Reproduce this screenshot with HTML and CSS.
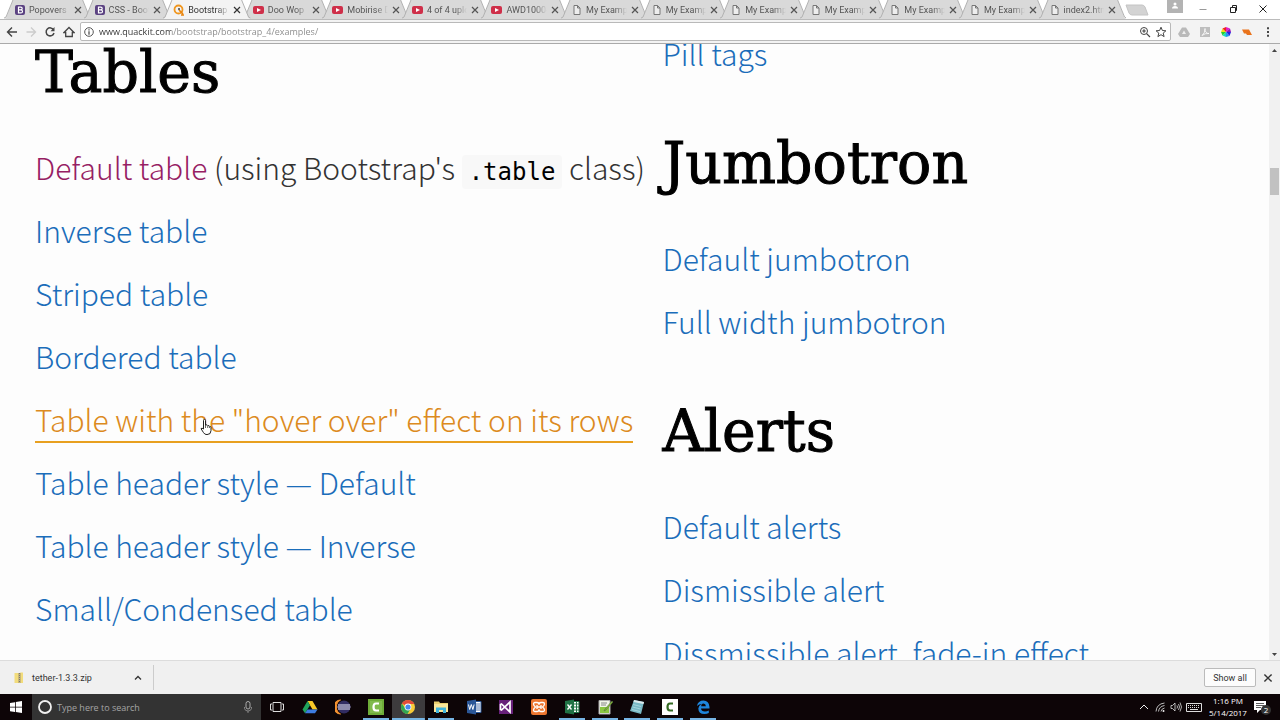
FILE: index.html
```html
<!DOCTYPE html>
<html lang="en">
<head>
    <meta charset="UTF-8">
    <meta name="viewport" content="width=device-width, initial-scale=1.0">
    <title>Bootstrap 4 Examples</title>
    <link rel="stylesheet" href="styles.css">
</head>
<body>
    <svg class="defs" aria-hidden="true">
        <symbol id="i-tab" viewBox="0 0 88 20" preserveAspectRatio="none">
            <path d="M0 20 L2 19 L9 0 H79 L86 19 L88 20Z" fill="currentColor" />
            <path d="M0 19 L2 18 L9 0 M79 0 L86 18 L88 19" fill="none" stroke="#b0b0b0" />
        </symbol>
        <symbol id="i-boot" viewBox="0 0 12 12">
            <rect x="1" y="1" width="10" height="10" rx="2" fill="#5b4282" />
            <path d="M4.5 3.2h2.2q1.5 0 1.5 1.3T6.7 5.9H4.5h2.4q1.6 0 1.6 1.5T6.9 8.9H4.5z" fill="none" stroke="#fff" stroke-width="1.2" />
        </symbol>
        <symbol id="i-quack" viewBox="0 0 12 12">
            <circle cx="5.5" cy="5.5" r="4" fill="none" stroke="#f0961e" stroke-width="1.8" />
            <path d="M6 6l4 4M8 11h3" stroke="#e8830c" stroke-width="1.7" />
            <circle cx="6" cy="5" r="1" fill="#444" />
        </symbol>
        <symbol id="i-yt" viewBox="0 0 12 12">
            <rect x="0" y="2" width="11" height="8" rx="2" fill="#cf2f49" />
            <path d="M4 4l4 2-4 2z" fill="#fff" />
        </symbol>
        <symbol id="i-file" viewBox="0 0 12 12">
            <path d="M3 1.5h3.5L9 4v6.500H3zM6.500 1.500V4H9" fill="#eee" stroke="#777" />
        </symbol>
        <symbol id="i-x" viewBox="0 0 10 10">
            <path d="M2 2l6 6M8 2l-6 6" stroke="currentColor" stroke-width="1.2" />
        </symbol>
        <symbol id="i-up" viewBox="0 0 12 12">
            <path d="M3 7.500l3-3 3 3" fill="none" stroke="currentColor" stroke-width="1.3" />
        </symbol>
        <symbol id="i-camtasia" viewBox="0 0 16 16">
            <path d="M11 4.500H8Q5.500 4.500 5.500 8T8 11.500h3" fill="none" stroke="currentColor" stroke-width="2.200" />
        </symbol>
    </svg>

    <header class="tab-strip">
        <nav class="tabs">
            <a class="tab" href="#"><svg class="tab-bg"><use href="#i-tab" /></svg><svg class="tab-icon"><use href="#i-boot" /></svg><span class="tab-title">Popovers ·</span><svg class="tab-close"><use href="#i-x" /></svg></a>
            <a class="tab" href="#"><svg class="tab-bg"><use href="#i-tab" /></svg><svg class="tab-icon"><use href="#i-boot" /></svg><span class="tab-title">CSS - Boots</span><svg class="tab-close"><use href="#i-x" /></svg></a>
            <a class="tab active" href="#"><svg class="tab-bg"><use href="#i-tab" /></svg><svg class="tab-icon"><use href="#i-quack" /></svg><span class="tab-title">Bootstrap 4</span><svg class="tab-close"><use href="#i-x" /></svg></a>
            <a class="tab" href="#"><svg class="tab-bg"><use href="#i-tab" /></svg><svg class="tab-icon"><use href="#i-yt" /></svg><span class="tab-title">Doo Wop</span><svg class="tab-close"><use href="#i-x" /></svg></a>
            <a class="tab" href="#"><svg class="tab-bg"><use href="#i-tab" /></svg><svg class="tab-icon"><use href="#i-yt" /></svg><span class="tab-title">Mobirise D</span><svg class="tab-close"><use href="#i-x" /></svg></a>
            <a class="tab" href="#"><svg class="tab-bg"><use href="#i-tab" /></svg><svg class="tab-icon"><use href="#i-yt" /></svg><span class="tab-title">4 of 4 uplo</span><svg class="tab-close"><use href="#i-x" /></svg></a>
            <a class="tab" href="#"><svg class="tab-bg"><use href="#i-tab" /></svg><svg class="tab-icon"><use href="#i-yt" /></svg><span class="tab-title">AWD1000-</span><svg class="tab-close"><use href="#i-x" /></svg></a>
            <a class="tab" href="#"><svg class="tab-bg"><use href="#i-tab" /></svg><svg class="tab-icon"><use href="#i-file" /></svg><span class="tab-title">My Exampl</span><svg class="tab-close"><use href="#i-x" /></svg></a>
            <a class="tab" href="#"><svg class="tab-bg"><use href="#i-tab" /></svg><svg class="tab-icon"><use href="#i-file" /></svg><span class="tab-title">My Exampl</span><svg class="tab-close"><use href="#i-x" /></svg></a>
            <a class="tab" href="#"><svg class="tab-bg"><use href="#i-tab" /></svg><svg class="tab-icon"><use href="#i-file" /></svg><span class="tab-title">My Exampl</span><svg class="tab-close"><use href="#i-x" /></svg></a>
            <a class="tab" href="#"><svg class="tab-bg"><use href="#i-tab" /></svg><svg class="tab-icon"><use href="#i-file" /></svg><span class="tab-title">My Exampl</span><svg class="tab-close"><use href="#i-x" /></svg></a>
            <a class="tab" href="#"><svg class="tab-bg"><use href="#i-tab" /></svg><svg class="tab-icon"><use href="#i-file" /></svg><span class="tab-title">My Exampl</span><svg class="tab-close"><use href="#i-x" /></svg></a>
            <a class="tab" href="#"><svg class="tab-bg"><use href="#i-tab" /></svg><svg class="tab-icon"><use href="#i-file" /></svg><span class="tab-title">My Exampl</span><svg class="tab-close"><use href="#i-x" /></svg></a>
            <a class="tab" href="#"><svg class="tab-bg"><use href="#i-tab" /></svg><svg class="tab-icon"><use href="#i-file" /></svg><span class="tab-title">index2.htm</span><svg class="tab-close"><use href="#i-x" /></svg></a>
        </nav>
        <div class="window-buttons">
            <button class="new-tab" aria-label="New tab"><svg viewBox="0 0 24 12"><path d="M1 1h16q2 0 3 2l3 8H7q-2 0-3-2z" fill="#d3d3d3" stroke="#c4c4c4" /></svg></button>
            <button class="profile" aria-label="Profile"><svg viewBox="0 0 16 13"><path d="M0 0h16v13H0z" fill="#b3b3b3" /><circle cx="8" cy="4" r="1.500" fill="#fff" /><path d="M5 8.500q0-2.500 3-2.500t3 2.500z" fill="#fff" /></svg></button>
            <button class="win-btn" aria-label="Minimize"><svg viewBox="0 0 12 12"><path d="M2.500 6.500h7" stroke="#999" /></svg></button>
            <button class="win-btn" aria-label="Restore"><svg viewBox="0 0 12 12"><path d="M3.500 4.500h5v5h-5zM5.500 4.500v-2h4v5h-1" fill="none" stroke="#222" /></svg></button>
            <button class="win-btn" aria-label="Close"><svg viewBox="0 0 12 12"><path d="M2.500 2.500l7 7M9.500 2.500l-7 7" stroke="#222" /></svg></button>
        </div>
    </header>

    <div class="toolbar">
        <button class="tool" aria-label="Back"><svg viewBox="0 0 12 12"><path d="M11 6H2M6 1.500L1.500 6 6 10.500" fill="none" stroke="#444" stroke-width="1.400" /></svg></button>
        <button class="tool" aria-label="Forward"><svg viewBox="0 0 12 12"><path d="M1.500 6h9M6 1.500L10.500 6 6 10.500" fill="none" stroke="#ccc" stroke-width="1.400" /></svg></button>
        <button class="tool" aria-label="Reload"><svg viewBox="0 0 12 12"><path d="M9.600 3.800A4 4 0 1 0 10 7" fill="none" stroke="#444" stroke-width="1.500" /><path d="M10.500 1v4.200H6.500z" fill="#444" /></svg></button>
        <button class="tool" aria-label="Home"><svg viewBox="0 0 12 12"><path d="M1 6.500L6 1.500l5 5H9.300v4H2.700v-4z" fill="none" stroke="#444" stroke-width="1.300" /></svg></button>
        <div class="address">
            <svg class="address-icon" viewBox="0 0 12 12"><circle cx="6" cy="6" r="4.300" fill="none" stroke="#555" /><path d="M6 3.200v1.200M6 5.300v3.500" stroke="#444" stroke-width="1.200" /></svg>
            <input class="url" type="text" aria-label="Address" value="www.quackit.com/bootstrap/bootstrap_4/examples/">
            <svg class="address-icon" viewBox="0 0 12 12"><circle cx="5" cy="5" r="3.500" fill="none" stroke="#444" /><path d="M3.200 5h3.600M5 3.200v3.600M7.600 7.600L11 11" stroke="#444" stroke-width="1.200" /></svg>
            <svg class="address-icon" viewBox="0 0 12 12"><path d="M6 1.200l1.400 3.300 3.500.3-2.700 2.300.9 3.500L6 8.700l-3.100 1.900.9-3.500L1.100 4.800l3.500-.3z" fill="none" stroke="#444" /></svg>
        </div>
        <div class="extensions">
            <svg viewBox="0 0 12 12"><path d="M4 1.500h4l4 6.500-2 3H2L0 8z" fill="#b9b9b9" /><path d="M6 4.500L8 8H4z" fill="#eee" /></svg>
            <svg viewBox="0 0 12 12"><path d="M1 1h10v10H1z" fill="#bebebe" /><path d="M3 9.500q3-2 3-7 0 5 4 5-4-.5-7 2z" fill="none" stroke="#fff" stroke-width=".8" /></svg>
            <svg viewBox="0 0 12 12"><path d="M6 6V1l4 1.500z" fill="#e21cc8" /><path d="M6 6l4-3.500L11 6z" fill="#9414b8" /><path d="M6 6h5l-1.500 4z" fill="#2422e0" /><path d="M6 6l3.500 4L6 11z" fill="#2090f0" /><path d="M6 6v5L2.500 9.500z" fill="#18d8c0" /><path d="M6 6L2.500 9.500 1 6z" fill="#24cf30" /><path d="M6 6H1l1.500-3.500z" fill="#f1dc18" /><path d="M6 6L2.500 2.500 6 1z" fill="#f02020" /></svg>
            <svg viewBox="0 0 12 12"><path d="M1 3.500h7l3 5.500H6L5 7.500H3z" fill="#e9731c" /></svg>
            <svg viewBox="0 0 12 12"><path d="M5 1.200h2v2H5zM5 5h2v2H5zM5 8.800h2v2H5z" fill="#444" /></svg>
        </div>
    </div>

    <div class="viewport">
        <main class="page">
            <section class="column">
                <h2>Tables</h2>
                <ul class="examples">
                    <li><a class="visited" href="#">Default table</a> (using Bootstrap's <code>.table</code> class)</li>
                    <li><a href="#">Inverse table</a></li>
                    <li><a href="#">Striped table</a></li>
                    <li><a href="#">Bordered table</a></li>
                    <li class="pointed"><a class="hovered" href="#">Table with the "hover over" effect on its rows</a>
                        <svg class="pointer" viewBox="0 0 12 18"><path d="M3.500 10V2.500q0-1.200 1-1.200t1 1.200V7q2-.6 2.300.6 1.500-.2 1.700.7 1.500 0 1.500 1.300v3q0 4-4 4-2.500 0-3.500-2L1 10.700q.8-1.300 2.500.3z" fill="#fff" stroke="#222" /><path d="M5.500 7v3M7.700 8v2M9.500 8.500V10" stroke="#222" stroke-width=".7" /></svg>
                    </li>
                    <li><a href="#">Table header style — Default</a></li>
                    <li><a href="#">Table header style — Inverse</a></li>
                    <li><a href="#">Small/Condensed table</a></li>
                </ul>
            </section>
            <section class="column column-right">
                <ul class="examples">
                    <li><a href="#">Pill tags</a></li>
                </ul>
                <h2>Jumbotron</h2>
                <ul class="examples">
                    <li><a href="#">Default jumbotron</a></li>
                    <li><a href="#">Full width jumbotron</a></li>
                </ul>
                <h2>Alerts</h2>
                <ul class="examples">
                    <li><a href="#">Default alerts</a></li>
                    <li><a href="#">Dismissible alert</a></li>
                    <li><a href="#">Dissmissible alert, fade-in effect</a></li>
                </ul>
            </section>
        </main>
        <div class="scrollbar">
            <svg viewBox="0 0 11 12"><path d="M3 8l2.500-3L8 8z" fill="#444" /></svg>
            <div class="track"><div class="thumb"></div></div>
            <svg viewBox="0 0 11 12"><path d="M3 5l2.500 3L8 5z" fill="#444" /></svg>
        </div>
    </div>

    <div class="downloads">
        <button class="download">
            <svg class="zip" viewBox="0 0 12 12"><path d="M1.500 1h5l1-.5H10V11H1.500z" fill="#f2dc7c" /><path d="M5 1h3v10H5z" fill="#c9b777" /><path d="M6.500 1v10" stroke="#777" stroke-dasharray="1 1" /></svg>
            <span class="file-name">tether-1.3.3.zip</span>
            <svg class="chevron"><use href="#i-up" /></svg>
        </button>
        <button class="show-all">Show all</button>
        <button class="close-bar" aria-label="Close downloads"><svg><use href="#i-x" /></svg></button>
    </div>

    <footer class="taskbar">
        <button class="start" aria-label="Start"><svg viewBox="0 0 14 14"><path d="M1 3l5-.8v4.500H1zM6.800 2L13 1v5.700H6.800zM1 7.400h5V12l-5-.8zM6.800 7.400H13V13l-6.200-1z" fill="#fff" /></svg></button>
        <div class="search">
            <svg class="cortana" viewBox="0 0 16 16"><circle cx="8" cy="8" r="6" fill="none" stroke="#f0f0f0" stroke-width="1.800" /></svg>
            <input type="text" aria-label="Search" placeholder="Type here to search">
            <svg class="mic" viewBox="0 0 12 14"><rect x="4" y="1.500" width="4" height="7.500" rx="2" fill="none" stroke="#aaa" /><path d="M2.500 7v1.500Q3 11 6 11t3.500-2.500V7M6 11v2" fill="none" stroke="#999" stroke-width=".8" /></svg>
        </div>
        <div class="apps">
            <button class="app" aria-label="Task view"><svg viewBox="0 0 16 16"><path d="M4 3.500h8v9H4zM3 5H1.500v6H3M13 5h1.500v6H13" fill="none" stroke="#ddd" /></svg></button>
            <button class="app" aria-label="Google Drive"><svg viewBox="0 0 16 16"><path d="M5.500 2h5l5 8.500h-5z" fill="#f8c828" /><path d="M5.500 2L8 6.300l-5 8L.5 10.500z" fill="#20a35c" /><path d="M5.500 10.500h10L13 14.300H3z" fill="#3d7ce0" /></svg></button>
            <button class="app" aria-label="Eclipse"><svg viewBox="0 0 16 16"><path d="M5.500 1A7 7 0 0 0 5.500 15 8 8 0 0 1 5.500 1z" fill="#f59332" stroke="#f59332" /><circle cx="9" cy="8" r="6.500" fill="#322d62" /><path d="M3 6h12M2.500 8h13M3 10h12" stroke="#e8e8f5" stroke-width="1.200" /></svg></button>
            <button class="app running" aria-label="Camtasia"><svg viewBox="0 0 16 16" class="camtasia"><path d="M0 0h16v16H0z" fill="#6eac38" /><path d="M2 2h12v12H2z" fill="#80bb4d" /><use href="#i-camtasia" /></svg></button>
            <button class="app running current" aria-label="Chrome"><svg viewBox="0 0 16 16"><circle cx="8" cy="8" r="7" fill="#f7cb38" /><path d="M8 8L1.900 4.500A7 7 0 0 1 14.100 4.500L14 5H8z" fill="#e24b3a" /><path d="M1.900 4.500A7 7 0 0 0 7.500 15l3.200-5.500L5.300 9.500z" fill="#32a653" /><circle cx="8" cy="8" r="3.400" fill="#fff" /><circle cx="8" cy="8" r="2.600" fill="#4788ee" /></svg></button>
            <button class="app running" aria-label="File Explorer"><svg viewBox="0 0 16 16"><path d="M1 2.500h5l1 1.500h8v9H1z" fill="#e9cf70" /><path d="M1 5h14v8H1z" fill="#f8e69b" /><path d="M3 14V8.500h10V14h-3v-3H6v3z" fill="#40b4dc" /></svg></button>
            <button class="app" aria-label="Word"><svg viewBox="0 0 16 16"><path d="M8 2.500h7v11H8z" fill="#fff" stroke="#2b5797" /><path d="M9.500 5H14M9.500 7H14M9.500 9H14M9.500 11H14" stroke="#2b5797" stroke-width=".8" /><path d="M1 2l9-1.500v15L1 14z" fill="#2b5797" /><path d="M2.500 5.500l1.200 5 1.600-5 1.600 5 1.200-5" fill="none" stroke="#fff" /></svg></button>
            <button class="app" aria-label="Visual Studio"><svg viewBox="0 0 16 16"><path d="M1 1h14v14H1z" fill="#68217a" /><path d="M2.500 5.500v5l1 .500L12 3v10L3.500 5z" fill="none" stroke="#fff" stroke-width="1.700" /></svg></button>
            <button class="app" aria-label="XAMPP"><svg viewBox="0 0 16 16"><rect width="16" height="16" rx="2" fill="#ed762f" /><path d="M4 3.500h2q2 0 2 2.200 0-2.200 2-2.200h2q1.500 0 1.500 1.500T11.500 8q2 1.500 2 3T12 12.500h-2q-2 0-2-2.200 0 2.200-2 2.200H4Q2.500 12.500 2.500 11t2-3q-2-1.500-2-3T4 3.500zM6 6v4M10 6v4M6 8h4" fill="none" stroke="#fff" stroke-width="1.300" /></svg></button>
            <button class="app running" aria-label="Excel"><svg viewBox="0 0 16 16"><path d="M8 2.500h7v11H8z" fill="#fff" stroke="#207245" /><path d="M9 5h6M9 8h6M9 11h6M12.500 3v10" stroke="#207245" /><path d="M1 2l9-1.500v15L1 14z" fill="#207245" /><path d="M3.500 5.500l4 5M7.500 5.500l-4 5" stroke="#fff" stroke-width="1.300" /></svg></button>
            <button class="app running" aria-label="Notepad++"><svg viewBox="0 0 16 16"><path d="M2 1.500h11V15H2z" fill="#f1f5e8" stroke="#aaa" /><path d="M3 8h9v6H3z" fill="#8ac640" /><path d="M4 4h6M4 6h5" stroke="#888" /><path d="M15 2L8 10l-1 2 2-1 7-8z" fill="#8bb933" stroke="#464" stroke-width=".500" /></svg></button>
            <button class="app running" aria-label="Notepad"><svg viewBox="0 0 16 16"><path d="M5 1l10 2-3 12-11-3z" fill="#79b9c5" /><path d="M5 1l10 2-.5 2-10-2z" fill="#ddebed" /><path d="M4 5.500l8 2M3.500 8l8 2M3 10.500l8 2" stroke="#b6e0e5" stroke-width=".7" /></svg></button>
            <button class="app running" aria-label="Camtasia Recorder"><svg viewBox="0 0 16 16" class="recorder"><path d="M0 0h16v16H0z" fill="#fff" /><use href="#i-camtasia" /></svg></button>
            <button class="app running" aria-label="Edge"><svg viewBox="0 0 16 16"><path d="M2 7Q3 1.500 8.500 1.500 14 1.500 14.500 8v1.500H6Q6.300 12.500 10 12.500q2 0 3.800-1V14Q12 15 9.500 15 3.500 15 3.300 9.500 3.500 6.500 6.500 5 4 5 2 7zM6.200 7.200h4.700Q10.700 4.500 8.500 4.500T6.200 7.200z" fill="#1e86dc" fill-rule="evenodd" /></svg></button>
        </div>
        <div class="tray">
            <svg viewBox="0 0 12 12"><path d="M2 8l4-4 4 4" fill="none" stroke="#eee" /></svg>
            <svg viewBox="0 0 12 12"><path d="M2 10.500Q2.500 3 10.500 2M4.500 10.500Q5 5.500 10.500 4.500M7 10.500Q7 8 10.500 7" fill="none" stroke="#bbb" /><circle cx="9.500" cy="10" r="1" fill="#eee" /></svg>
            <svg viewBox="0 0 12 12"><path d="M1 4.500h1.500L5 2v8L2.500 7.500H1zM7 4.500q1 1.500 0 3M8.500 3q2 3 0 6M10 1.500q3 4.500 0 9" fill="none" stroke="#ddd" stroke-width=".8" /></svg>
            <svg class="keyboard" viewBox="0 0 16 12"><path d="M.5 2.500h15v8H.5z" fill="none" stroke="#ddd" /><path d="M2 4.500h12M2 6.500h12" stroke="#ddd" stroke-dasharray="1 1" /><path d="M4 8.500h8" stroke="#ddd" /></svg>
            <div class="clock"><span>1:16 PM</span><span>5/14/2017</span></div>
            <button class="notices" aria-label="Notifications"><svg viewBox="0 0 12 14"><path d="M0 1h12v9H6l-3 3v-3H0z" fill="#fff" /><path d="M2 3.500h8M2 5.500h8M2 7.500h5" stroke="#333" stroke-width=".8" /></svg><span class="badge">2</span></button>
        </div>
    </footer>
</body>
</html>
```
FILE: styles.css
```css
* {
    box-sizing: border-box;
}

body {
    margin: 0;
    height: 100vh;
    display: flex;
    flex-direction: column;
    overflow: hidden;
    font-family: "Open Sans", "Noto Sans", sans-serif;
    font-size: 9px;
    color: #333;
    background-color: #fdfdfd;
}

button {
    display: flex;
    align-items: center;
    justify-content: center;
    padding: 0;
    border: none;
    background: none;
    font: inherit;
    color: inherit;
}

input {
    min-width: 0;
    flex: 1;
    padding: 0;
    border: none;
    outline: none;
    background: none;
    font: inherit;
}

svg {
    display: block;
    flex: none;
    width: 12px;
    height: 12px;
}

.defs {
    position: absolute;
    width: 0;
    height: 0;
}

/* browser tabs */
.tab-strip {
    display: flex;
    flex: none;
    height: 19px;
    padding-left: 8px;
    font-family: Roboto, sans-serif;
    background-color: #fff;
}

.tabs {
    display: flex;
    flex: 1;
    min-width: 0;
}

.tab {
    position: relative;
    display: flex;
    flex: 1;
    min-width: 0;
    align-items: center;
    gap: 3px;
    padding: 1px 5px 0 6px;
    color: #555;
    text-decoration: none;
}

.tab-bg {
    position: absolute;
    top: 0;
    left: -4px;
    width: calc(100% + 8px);
    height: 19px;
    color: #d9d9d9;
}

.tab.active {
    z-index: 1;
    color: #333;
}

.tab.active .tab-bg {
    color: #f3f3f3;
}

.tab-icon,
.tab-close {
    position: relative;
}

.tab-close {
    width: 10px;
    height: 10px;
}

.tab-title {
    position: relative;
    flex: 1;
    overflow: hidden;
    white-space: nowrap;
    mask-image: linear-gradient(to right, #000 70%, transparent);
}

.window-buttons {
    display: flex;
    align-items: flex-start;
    width: 158px;
}

.window-buttons svg {
    width: 100%;
    height: 100%;
}

.new-tab {
    width: 24px;
    height: 12px;
    margin: 4px 18px 0 3px;
}

.profile {
    width: 16px;
    height: 13px;
    margin-right: 14px;
}

.win-btn {
    width: 12px;
    height: 12px;
    margin: 3px 18px 0 0;
}

.win-btn:last-child {
    margin-right: 0;
}

/* toolbar */
.toolbar {
    display: flex;
    flex: none;
    align-items: center;
    gap: 7px;
    height: 25px;
    padding: 0 6px;
    background-color: #f3f3f3;
    border-top: 1px solid #bbb;
    border-bottom: 1px solid #aaa;
}

.tool {
    width: 12px;
    height: 12px;
}

.address {
    display: flex;
    flex: 1;
    align-items: center;
    gap: 4px;
    height: 19px;
    margin-left: -2px;
    padding: 0 3px 0 2px;
    background-color: #fff;
    border: 1px solid #b9b9b9;
    border-radius: 2px;
}

/* host is darker than the path */
.url {
    color: transparent;
    background-image: linear-gradient(to right, #333 72px, #888 72px);
    -webkit-background-clip: text;
    background-clip: text;
}

.extensions {
    display: flex;
    gap: 9px;
}

/* page */
.viewport {
    display: flex;
    flex: 1;
    min-height: 0;
}

.page {
    flex: 1;
    display: grid;
    grid-template-columns: 1fr 1fr;
    gap: 21px;
    padding-left: 35px;
    overflow: hidden;
    font-family: "Noto Sans CJK JP", "Noto Sans", sans-serif;
    font-size: 30px;
    font-weight: 300;
    line-height: 63px;
    white-space: nowrap;
}

.column {
    min-width: 0;
    margin-top: -2px;
}

.column-right {
    margin-top: -22px;
}

.page h2 {
    margin: 0;
    padding-bottom: 34px;
    font-family: "DejaVu Serif", serif;
    font-size: 57px;
    font-weight: 400;
    line-height: 60px;
    color: #000;
    -webkit-text-stroke: 1px #000;
}

.examples {
    margin: 0;
    padding: 0;
    list-style: none;
}

.examples + h2 {
    padding-top: 48px;
}

.examples a {
    color: #1b6dba;
    text-decoration: none;
}

.examples .visited {
    color: #962063;
}

.examples .hovered {
    color: #dc8a20;
    border-bottom: 2px solid #e8a020;
}

.examples code {
    padding: 3px 7px;
    font-family: "DejaVu Sans Mono", monospace;
    font-size: 24px;
    font-weight: 400;
    line-height: 24px;
    color: #000;
    background-color: #f8f8f8;
    border-radius: 4px;
}

.pointed {
    position: relative;
}

.pointer {
    position: absolute;
    top: 30px;
    left: 165px;
    width: 12px;
    height: 18px;
}

.scrollbar {
    display: flex;
    flex-direction: column;
    width: 11px;
    background-color: #f1f1f1;
}

.scrollbar svg {
    width: 11px;
}

.track {
    flex: 1;
    padding: 112px 1px 0;
}

.thumb {
    height: 27px;
    background-color: #c1c1c1;
}

/* downloads bar */
.downloads {
    display: flex;
    flex: none;
    align-items: center;
    height: 34px;
    padding-right: 6px;
    font-family: Roboto, sans-serif;
    background-color: #f0f0f0;
    border-top: 1px solid #dcdcdc;
}

.download {
    width: 154px;
    height: 25px;
    padding: 0 9px 0 13px;
    border-right: 1px solid #ccc;
}

.file-name {
    flex: 1;
    margin-left: 7px;
    text-align: left;
}

.show-all {
    width: 52px;
    height: 19px;
    margin-left: auto;
    background-color: #fcfcfc;
    border: 1px solid #bbb;
    border-radius: 2px;
}

.close-bar {
    margin-left: 6px;
}

/* taskbar */
.taskbar {
    display: flex;
    flex: none;
    height: 26px;
    color: #fff;
    background-color: #0d0507;
}

.start {
    width: 32px;
}

.search {
    display: flex;
    align-items: center;
    gap: 4px;
    width: 229px;
    padding: 0 7px 0 5px;
    background-color: #333;
}

.search input {
    color: #fff;
}

.search input::placeholder {
    color: #a5a5a5;
}

.cortana {
    width: 16px;
    height: 16px;
}

.mic {
    height: 14px;
}

.apps {
    display: flex;
    width: 458px;
}

.app {
    flex: 1;
}

.app svg {
    width: 16px;
    height: 16px;
}

.running {
    background: linear-gradient(#76b5e4, #76b5e4) bottom / 26px 2px no-repeat;
}

.current {
    background-color: #3d3b3d;
    background-size: 100% 2px;
}

.camtasia {
    color: #fff;
}

.recorder {
    color: #356b24;
}

.start svg {
    width: 14px;
    height: 14px;
}

.tray {
    display: flex;
    align-items: center;
    gap: 4px;
    margin-left: auto;
    padding-right: 14px;
}

.tray .keyboard {
    width: 16px;
}

.clock {
    display: flex;
    flex-direction: column;
    align-items: center;
    width: 44px;
    font-size: 8px;
    line-height: 12px;
}

.notices {
    position: relative;
}

.notices svg {
    height: 14px;
}

.badge {
    position: absolute;
    top: 5px;
    left: 7px;
    width: 10px;
    height: 10px;
    font-size: 8px;
    line-height: 10px;
    text-align: center;
    background-color: #333;
    border-radius: 50%;
}
```
